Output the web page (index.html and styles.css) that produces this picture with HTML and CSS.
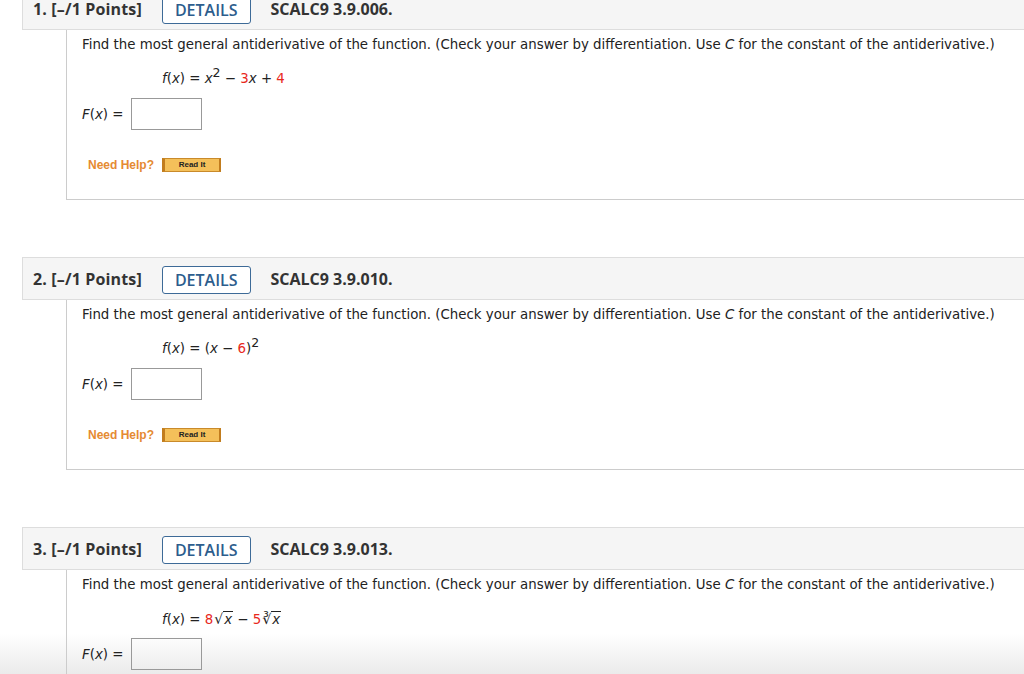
FILE: index.html
```html
<!DOCTYPE html>
<html>
<head>
<meta charset="utf-8">
<link rel="stylesheet" href="styles.css">
</head>
<body>
<div class="page">
  <div class="question">
    <div class="qhead">
      <span class="qnum">1. [–/1 Points]</span>
      <span class="details">DETAILS</span>
      <span class="code">SCALC9 3.9.006.</span>
    </div>
    <div class="qbody">
      <p class="prompt">Find the most general antiderivative of the function. (Check your answer by differentiation. Use <i>C</i> for the constant of the antiderivative.)</p>
      <p class="formula"><i>f</i>(<i>x</i>) = <i>x</i><sup>2</sup> − <span class="red">3</span><i>x</i> + <span class="red">4</span></p>
      <div class="answer"><span class="lbl"><i>F</i>(<i>x</i>) =</span><span class="box"></span></div>
      <div class="help"><span class="need">Need Help?</span><span class="readit">Read It</span></div>
    </div>
  </div>
  <div class="question">
    <div class="qhead">
      <span class="qnum">2. [–/1 Points]</span>
      <span class="details">DETAILS</span>
      <span class="code">SCALC9 3.9.010.</span>
    </div>
    <div class="qbody">
      <p class="prompt">Find the most general antiderivative of the function. (Check your answer by differentiation. Use <i>C</i> for the constant of the antiderivative.)</p>
      <p class="formula"><i>f</i>(<i>x</i>) = (<i>x</i> − <span class="red">6</span>)<sup>2</sup></p>
      <div class="answer"><span class="lbl"><i>F</i>(<i>x</i>) =</span><span class="box"></span></div>
      <div class="help"><span class="need">Need Help?</span><span class="readit">Read It</span></div>
    </div>
  </div>
  <div class="question">
    <div class="qhead">
      <span class="qnum">3. [–/1 Points]</span>
      <span class="details">DETAILS</span>
      <span class="code">SCALC9 3.9.013.</span>
    </div>
    <div class="qbody">
      <p class="prompt">Find the most general antiderivative of the function. (Check your answer by differentiation. Use <i>C</i> for the constant of the antiderivative.)</p>
      <p class="formula"><i>f</i>(<i>x</i>) = <span class="red">8</span><span class="rad">√</span><span class="under"><i>x</i></span> − <span class="red">5</span><span class="rad">∛</span><span class="under"><i>x</i></span></p>
      <div class="answer"><span class="lbl"><i>F</i>(<i>x</i>) =</span><span class="box"></span></div>
      <div class="help"><span class="need">Need Help?</span><span class="readit">Read It</span></div>
    </div>
  </div>
</div>
</body>
</html>
```
FILE: styles.css
```css
html {
  height: 100%;
  background: linear-gradient(to bottom, #ffffff 0, #ffffff calc(100% - 40px), #ebebeb 100%);
}
body {
  margin: 0;
  padding: 0;
  height: 100%;
  overflow: hidden;
}
.page {
  margin-top: -13px;
  font-family: "DejaVu Sans", Verdana, sans-serif;
  color: #222;
}
.question {
  margin-left: 22px;
  margin-bottom: 57px;
}
.qhead {
  height: 41px;
  background: #f5f5f5;
  border: 1px solid #ddd;
  border-right: none;
  display: flex;
  align-items: center;
  padding-left: 10px;
  font-family: "Open Sans", sans-serif;
  font-size: 16px;
  font-weight: 700;
  color: #333;
}
.qnum {
  margin-right: 20px;
  letter-spacing: 0.15px;
}
.details {
  display: inline-flex;
  align-items: center;
  height: 26px;
  padding: 0 12px;
  border: 1px solid #3d6a97;
  border-radius: 3px;
  background: #fff;
  color: #2d5d8d;
  font-weight: 600;
  margin-right: 20px;
  margin-top: 2px;
}
.qbody {
  margin-left: 44px;
  height: 170px;
  border-left: 1px solid #ccc;
  border-bottom: 1px solid #ccc;
  padding-left: 15px;
  font-size: 13.35px;
  box-sizing: border-box;
  padding-top: 7px;
}
.prompt {
  margin: 0;
  line-height: 16px;
}
.formula {
  margin: 17px 0 0 80px;
  line-height: 18px;
  height: 18px;
}
.formula sup {
  font-size: 12.5px;
  line-height: 0;
  vertical-align: 0.5em;
}
.red {
  color: #e8281c;
}
.rad {
  display: inline-block;
  font-size: 14px;
  margin-left: 1px;
}
.under {
  border-top: 1px solid #222;
  padding: 0 1px;
}
.answer {
  display: flex;
  align-items: center;
  margin-top: 10px;
}
.lbl {
  margin-right: 8px;
}
.box {
  width: 69px;
  height: 30px;
  border: 1px solid #999;
}
.help {
  display: flex;
  align-items: center;
  margin-top: 28px;
  margin-left: 6px;
}
.need {
  font-family: "Liberation Sans", Arial, sans-serif;
  font-size: 12px;
  font-weight: 700;
  color: #e58a32;
  margin-right: 8px;
}
.readit {
  width: 54px;
  height: 12px;
  box-sizing: content-box;
  border: 1px solid #c98a2a;
  border-left: 3px solid #c17c1e;
  border-right: 2px solid #c17c1e;
  background: #f4c05a;
  font-family: "Liberation Sans", Arial, sans-serif;
  font-size: 8px;
  font-weight: 700;
  color: #222;
  text-align: center;
  line-height: 12px;
}
```
